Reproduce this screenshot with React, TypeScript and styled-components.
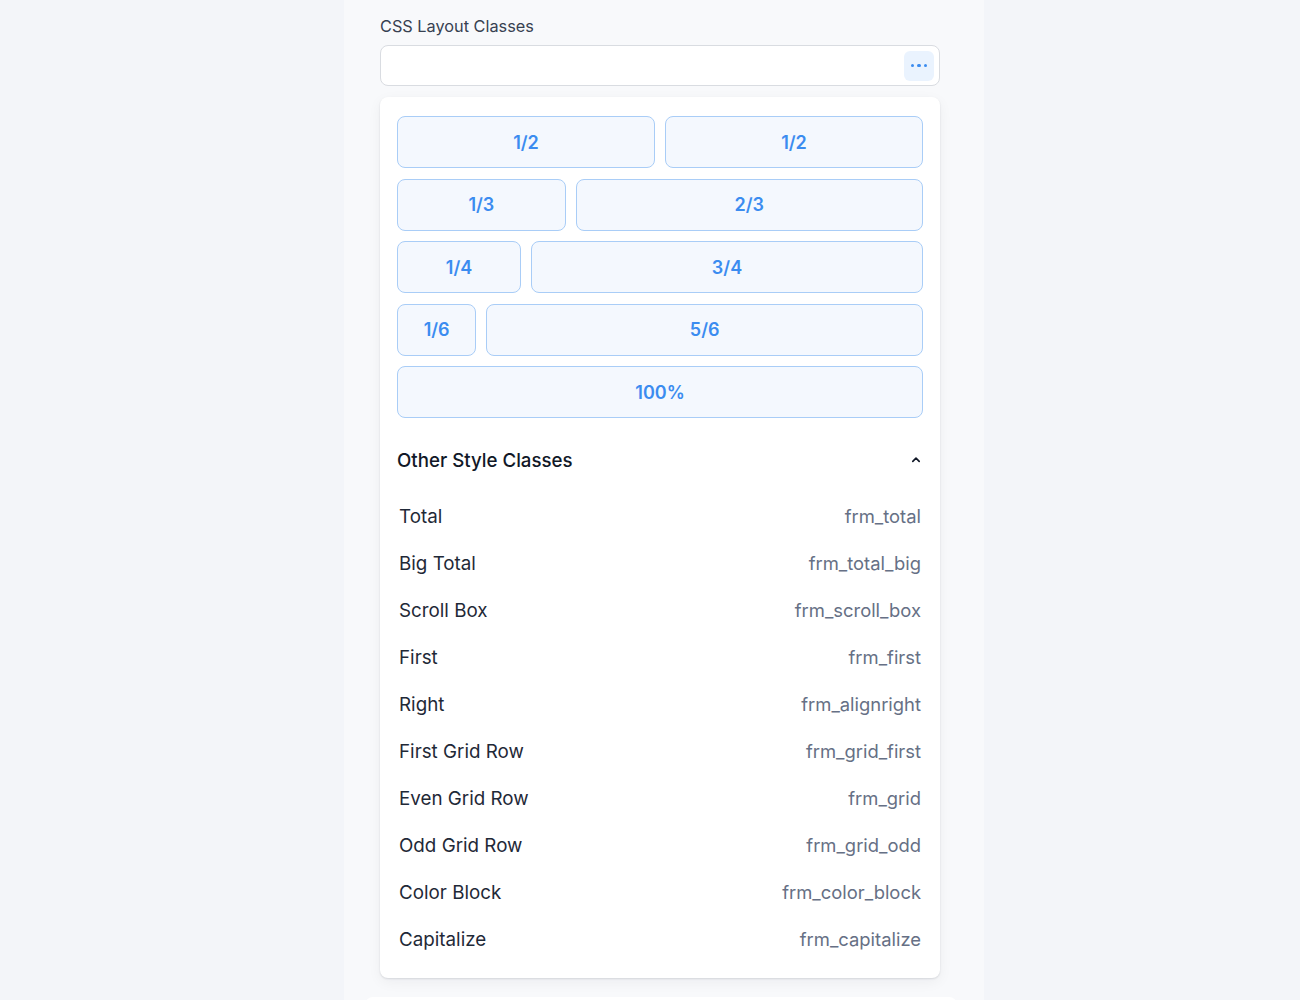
import React from "react";
import styled, { createGlobalStyle } from "styled-components";

const Global = createGlobalStyle`
  html, body { margin: 0; padding: 0; }
  body {
    background: #f3f5f9;
    font-family: Inter, "Noto Sans", sans-serif;
    -webkit-font-smoothing: antialiased;
  }
`;

const Page = styled.div`
  display: flex;
  justify-content: center;
  height: 1000px;
  overflow: hidden;
`;

const Column = styled.div`
  width: 640px;
  flex-shrink: 0;
  margin-left: 28px;
  background: #f8f9fb;
  padding: 15px 44px 0 36px;
  box-sizing: border-box;
`;

const Label = styled.div`
  font-size: 16.3px;
  color: #374151;
  line-height: 22px;
  margin-bottom: 8px;
`;

const InputBox = styled.div`
  height: 41px;
  box-sizing: border-box;
  border: 1px solid #d9dce1;
  border-radius: 8px;
  background: #fff;
  display: flex;
  justify-content: flex-end;
  align-items: center;
  padding-right: 5px;
`;

const DotsButton = styled.button`
  width: 30px;
  height: 30px;
  border: none;
  border-radius: 6px;
  background: #eaf3fe;
  display: flex;
  align-items: center;
  justify-content: center;
  gap: 3px;
  padding: 0;
`;

const Dot = styled.span`
  width: 3.5px;
  height: 3.5px;
  border-radius: 50%;
  background: #3b8cf0;
`;

const Panel = styled.div`
  margin-top: 11px;
  background: #fff;
  border-radius: 8px;
  box-shadow: 0 1px 2px rgba(15, 23, 42, 0.12), 0 4px 14px rgba(15, 23, 42, 0.05);
  padding: 19px 17px 15px 17px;
`;

const Grid = styled.div`
  display: grid;
  grid-template-columns: repeat(12, 1fr);
  column-gap: 10px;
  row-gap: 10.5px;
`;

const SizeButton = styled.button<{ $span: number }>`
  grid-column: span ${(p) => p.$span};
  height: 52px;
  box-sizing: border-box;
  border: 1px solid #a9cdf7;
  border-radius: 8px;
  background: #f4f8fe;
  color: #3b8cf0;
  font-family: Inter, "Noto Sans", sans-serif;
  font-size: 18px;
  font-weight: 600;
  cursor: pointer;
`;

const SectionHeader = styled.div`
  display: flex;
  justify-content: space-between;
  align-items: center;
  margin-top: 30px;
  height: 24px;
  margin-bottom: 21px;
`;

const SectionTitle = styled.div`
  font-size: 18.7px;
  font-weight: 500;
  color: #111827;
`;

const Chevron = styled.svg`
  width: 12px;
  height: 12px;
  margin-right: 1px;
`;

const List = styled.div`
  display: flex;
  flex-direction: column;
  padding: 0 2px;
`;

const Row = styled.div`
  display: flex;
  justify-content: space-between;
  align-items: baseline;
  height: 47px;
  line-height: 47px;
`;

const RowLabel = styled.span`
  font-size: 18.8px;
  color: #1f2937;
`;

const RowValue = styled.span`
  font-size: 18.4px;
  color: #667085;
`;

const NextBlock = styled.div`
  margin-top: 19px;
  margin-left: -15px;
  margin-right: -17px;
  height: 40px;
  background: #fff;
  border-radius: 8px;
`;

const sizes: [string, number][] = [
  ["1/2", 6],
  ["1/2", 6],
  ["1/3", 4],
  ["2/3", 8],
  ["1/4", 3],
  ["3/4", 9],
  ["1/6", 2],
  ["5/6", 10],
  ["100%", 12],
];

const classes: [string, string][] = [
  ["Total", "frm_total"],
  ["Big Total", "frm_total_big"],
  ["Scroll Box", "frm_scroll_box"],
  ["First", "frm_first"],
  ["Right", "frm_alignright"],
  ["First Grid Row", "frm_grid_first"],
  ["Even Grid Row", "frm_grid"],
  ["Odd Grid Row", "frm_grid_odd"],
  ["Color Block", "frm_color_block"],
  ["Capitalize", "frm_capitalize"],
];

export default function App() {
  return (
    <>
      <Global />
      <Page>
        <Column>
          <Label>CSS Layout Classes</Label>
          <InputBox>
            <DotsButton aria-label="more">
              <Dot />
              <Dot />
              <Dot />
            </DotsButton>
          </InputBox>
          <Panel>
            <Grid>
              {sizes.map(([t, s], i) => (
                <SizeButton key={i} $span={s}>
                  {t}
                </SizeButton>
              ))}
            </Grid>
            <SectionHeader>
              <SectionTitle>Other Style Classes</SectionTitle>
              <Chevron viewBox="0 0 12 12" fill="none">
                <path d="M2.8 7.3L6 4.2L9.2 7.3" stroke="#111827" strokeWidth="1.7" strokeLinecap="round" strokeLinejoin="round" />
              </Chevron>
            </SectionHeader>
            <List>
              {classes.map(([l, v]) => (
                <Row key={v}>
                  <RowLabel>{l}</RowLabel>
                  <RowValue>{v}</RowValue>
                </Row>
              ))}
            </List>
          </Panel>
          <NextBlock />
        </Column>
      </Page>
    </>
  );
}
